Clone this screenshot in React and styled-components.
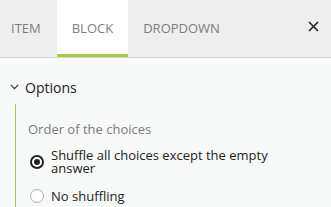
import styled, { createGlobalStyle } from "styled-components"

const Global = createGlobalStyle`
    html, body {
        margin: 0;
        padding: 0;
        background: #f8f9f9;
        font-family: 'Open Sans', 'Noto Sans', sans-serif;
        overflow: hidden;
    }
`

const tabs = ["ITEM", "BLOCK", "DROPDOWN"]

const App = () => {
    return (
        <>
            <Global />
            <Panel>
                <Header>
                    <Tabs>
                        {tabs.map((t) => (
                            <Tab key={t} active={t === "BLOCK"}>{t}</Tab>
                        ))}
                    </Tabs>
                    <Close aria-label="close">
                        <svg width="11" height="11" viewBox="0 0 11 11">
                            <path d="M1 1 L10 10 M10 1 L1 10" stroke="#222" strokeWidth="1.6" fill="none" />
                        </svg>
                    </Close>
                </Header>
                <Section>
                    <SectionTitle>
                        <svg width="9" height="6" viewBox="0 0 9 6">
                            <path d="M0.8 0.8 L4.5 4.6 L8.2 0.8" stroke="#333" strokeWidth="1.2" fill="none" />
                        </svg>
                        Options
                    </SectionTitle>
                    <Group>
                        <Label>Order of the choices</Label>
                        <Option>
                            <Radio checked />
                            <span>Shuffle all choices except the empty answer</span>
                        </Option>
                        <Option>
                            <Radio />
                            <span>No shuffling</span>
                        </Option>
                    </Group>
                </Section>
            </Panel>
        </>
    )
}

export default App

const Panel = styled.div`
    width: 331px;
    height: 207px;
    display: flex;
    flex-direction: column;
    overflow: hidden;
`

const Header = styled.div`
    flex: none;
    display: flex;
    justify-content: space-between;
    align-items: stretch;
    height: 57px;
    background: #eeeeee;
    border-bottom: 1px solid #d6d6d6;
`

const Tabs = styled.div`
    display: flex;
`

const Tab = styled.div`
    display: flex;
    align-items: center;
    padding: 1px 15px 0 15px;
    font-size: 13px;
    color: #7d7d7d;
    background: ${p => (p.active ? "#ffffff" : "transparent")};
    border-bottom: 3px solid ${p => (p.active ? "#a5cc3a" : "transparent")};

    &:first-child {
        padding-left: 11px;
        padding-right: 16px;
    }
`

const Close = styled.div`
    display: flex;
    align-items: center;
    padding: 0 12px 4px 0;
`

const Section = styled.div`
    padding: 18px 0 0 10px;
    flex: 1;
    min-height: 0;
    display: flex;
    flex-direction: column;
`

const SectionTitle = styled.div`
    flex: none;
    display: flex;
    align-items: center;
    gap: 6px;
    font-size: 14px;
    color: #222;
    height: 22px;
`

const Group = styled.div`
    margin-left: 5px;
    margin-top: 6px;
    border-left: 1px solid #a5cc3a;
    padding: 16px 0 0 12px;
    flex: 1;
    display: flex;
    flex-direction: column;
`

const Label = styled.div`
    font-size: 13px;
    color: #7a7a7a;
    margin-bottom: 11px;
`

const Option = styled.div`
    flex: none;
    display: flex;
    align-items: center;
    gap: 7px;
    padding-left: 2px;
    font-size: 13px;
    line-height: 13px;
    color: #222;
    padding-right: 40px;
    margin-bottom: 14px;
`

const Radio = styled.div`
    flex: none;
    width: 14px;
    height: 14px;
    box-sizing: border-box;
    border-radius: 50%;
    border: ${p => (p.checked ? "2px solid #222" : "1.5px solid #b0b0b0")};
    background: #fff;
    position: relative;
    &::after {
        content: "";
        display: ${p => (p.checked ? "block" : "none")};
        position: absolute;
        left: 2px;
        top: 2px;
        width: 6px;
        height: 6px;
        border-radius: 50%;
        background: #222;
    }
`
